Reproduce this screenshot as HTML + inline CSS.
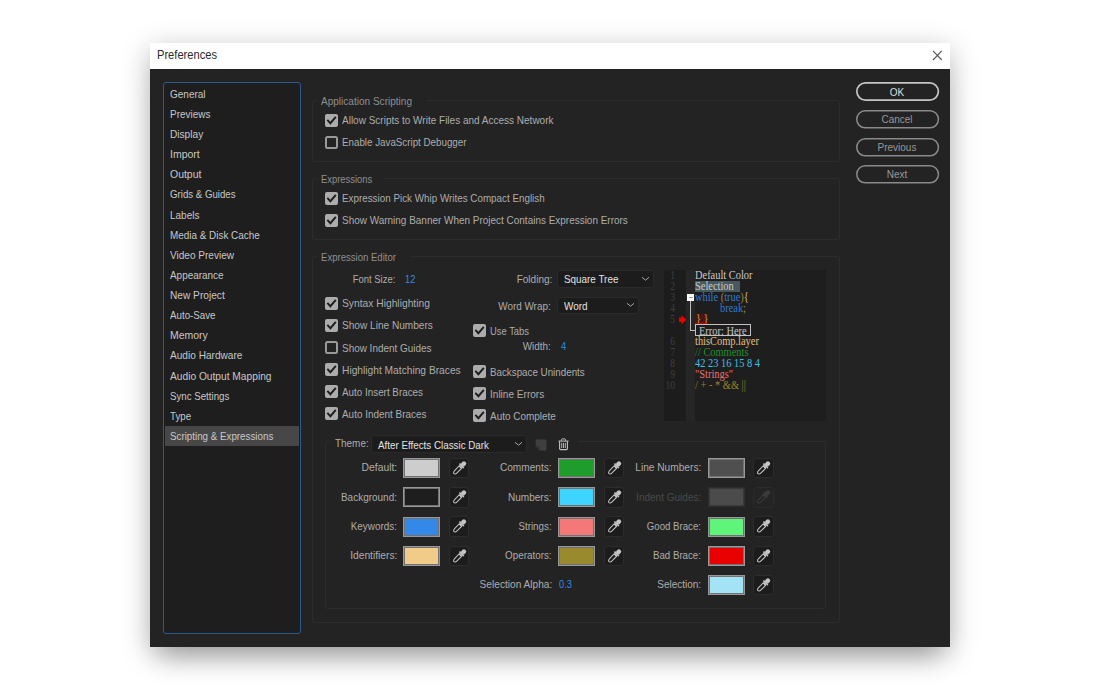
<!DOCTYPE html>
<html><head><meta charset="utf-8"><title>Preferences</title><style>
html,body{margin:0;padding:0;background:#fff;}
body{width:1100px;height:691px;position:relative;overflow:hidden;font-family:"Liberation Sans",sans-serif;}
.abs{position:absolute;display:block;}
.win{position:absolute;left:150px;top:43px;width:800px;height:604px;background:#232323;box-shadow:0 7px 27px rgba(0,0,0,.28),0 20px 26px -12px rgba(0,0,0,.22);}
.tb{position:absolute;left:150px;top:43px;width:800px;height:26px;background:#fff;}
.t{position:absolute;white-space:nowrap;line-height:14px;font-family:"Liberation Sans",sans-serif;color:#b0b0b0;}
.s{position:absolute;white-space:nowrap;line-height:12px;font-size:12px;font-family:"Liberation Serif",serif;}
.side{position:absolute;left:163px;top:82px;width:136px;height:550px;border:1px solid #2a5992;border-radius:3px;background:#1e1e1e;}
.sel{position:absolute;background:#474747;}
.si{color:#c8c8c8;}
.gt{color:#8f8f8f;}
.lb{color:#adadad;}
.dl{color:#4a4a4a;}
.num{color:#2d8ceb;}
.ddt{color:#e2e2e2;}
.bt{color:#989898;}
.bt.p{color:#dedede;}
.btn{position:absolute;width:80px;height:16px;border:1.7px solid #8a8a8a;border-radius:10px;}
.btn.prim{border:2px solid #c9c9c9;width:79px;height:15px;}
.gb{position:absolute;border:1px solid #2c2c2c;border-radius:2.5px;}
.gap{position:absolute;height:3px;background:#232323;}
.cb{position:absolute;width:13px;height:13px;box-sizing:border-box;border-radius:2px;}
.cb.on{background:#acacac;}
.cb.on svg{display:block;}
.cb.off{border:2px solid #999;background:#232323;border-radius:2.5px;}
.dd{position:absolute;border:1px solid #2a2a2a;border-radius:3px;background:#1c1c1c;}
.sw{position:absolute;width:33px;height:16px;border:1px solid #727272;box-shadow:0 0 0 1px #989898;margin:1px;}
.sw.dis{border-color:#383838;box-shadow:0 0 0 1px #2e2e2e;}
.eye{position:absolute;width:18.6px;height:18.6px;border:1px solid #2c2c2c;border-radius:3px;background:#1c1c1c;}
.eye svg{display:block;margin:-1px;}
.eye.dis{background:#242424;border-color:#2b2b2b;}
.pv{position:absolute;left:664.3px;top:269.7px;width:161.7px;height:151.3px;background:#1e1e1e;}
.pvg{position:absolute;left:664.3px;top:269.7px;width:21.5px;height:151.3px;background:#1c1c1c;}
.pvf{position:absolute;left:685.8px;top:269.7px;width:9.3px;height:151.3px;background:#262626;}
</style></head><body>
<div class="win"></div>
<div class="tb"></div>
<span class="t title" style="top:47.54px;font-size:12px;left:156.5px;transform:scaleX(0.927);transform-origin:0 0;color:#2a2a2a;">Preferences</span>
<svg class="abs" style="left:931px;top:48.5px" width="13" height="13" viewBox="0 0 13 13"><path d="M2 1.8 L10.8 11 M10.8 1.8 L2 11" stroke="#5a5a5a" stroke-width="1.2" fill="none"/></svg>
<div class="side"></div>
<div class="sel" style="left:165px;top:426px;width:134px;height:20px"></div>
<span class="t si" style="top:86.86px;font-size:10.5px;left:170px;transform:scaleX(0.9529);transform-origin:0 0;">General</span>
<span class="t si" style="top:106.98px;font-size:10.5px;left:170px;transform:scaleX(0.9481);transform-origin:0 0;">Previews</span>
<span class="t si" style="top:127.10px;font-size:10.5px;left:170px;transform:scaleX(0.9641);transform-origin:0 0;">Display</span>
<span class="t si" style="top:147.22px;font-size:10.5px;left:170px;transform:scaleX(1.0);transform-origin:0 0;">Import</span>
<span class="t si" style="top:167.34px;font-size:10.5px;left:170px;transform:scaleX(0.9958);transform-origin:0 0;">Output</span>
<span class="t si" style="top:187.46px;font-size:10.5px;left:170px;transform:scaleX(0.9199);transform-origin:0 0;">Grids &amp; Guides</span>
<span class="t si" style="top:207.58px;font-size:10.5px;left:170px;transform:scaleX(0.9498);transform-origin:0 0;">Labels</span>
<span class="t si" style="top:227.70px;font-size:10.5px;left:170px;transform:scaleX(0.943);transform-origin:0 0;">Media &amp; Disk Cache</span>
<span class="t si" style="top:247.82px;font-size:10.5px;left:170px;transform:scaleX(0.9561);transform-origin:0 0;">Video Preview</span>
<span class="t si" style="top:267.94px;font-size:10.5px;left:170px;transform:scaleX(0.9446);transform-origin:0 0;">Appearance</span>
<span class="t si" style="top:288.06px;font-size:10.5px;left:170px;transform:scaleX(0.9663);transform-origin:0 0;">New Project</span>
<span class="t si" style="top:308.18px;font-size:10.5px;left:170px;transform:scaleX(0.928);transform-origin:0 0;">Auto-Save</span>
<span class="t si" style="top:328.30px;font-size:10.5px;left:170px;transform:scaleX(0.9968);transform-origin:0 0;">Memory</span>
<span class="t si" style="top:348.42px;font-size:10.5px;left:170px;transform:scaleX(0.9615);transform-origin:0 0;">Audio Hardware</span>
<span class="t si" style="top:368.54px;font-size:10.5px;left:170px;transform:scaleX(0.9713);transform-origin:0 0;">Audio Output Mapping</span>
<span class="t si" style="top:388.66px;font-size:10.5px;left:170px;transform:scaleX(0.9236);transform-origin:0 0;">Sync Settings</span>
<span class="t si" style="top:408.78px;font-size:10.5px;left:170px;transform:scaleX(0.9268);transform-origin:0 0;">Type</span>
<span class="t si" style="top:428.90px;font-size:10.5px;left:170px;transform:scaleX(0.9315);transform-origin:0 0;">Scripting &amp; Expressions</span>
<svg class="abs" style="left:856px;top:82px" width="84" height="20" viewBox="0 0 84 20"><rect x="0.85" y="0.85" width="81.5" height="17.3" rx="8.65" fill="none" stroke="#c6c6c6" stroke-width="1.7"/></svg>
<span class="t bt p" style="top:84.86px;font-size:10.5px;left:796.9px;width:200px;text-align:center;transform:scaleX(0.95);transform-origin:50% 0;">OK</span>
<svg class="abs" style="left:856px;top:110px" width="84" height="20" viewBox="0 0 84 20"><rect x="0.75" y="0.75" width="81.7" height="17.1" rx="8.55" fill="none" stroke="#8a8a8a" stroke-width="1.5"/></svg>
<span class="t bt" style="top:112.16px;font-size:10.5px;left:796.9px;width:200px;text-align:center;transform:scaleX(0.95);transform-origin:50% 0;">Cancel</span>
<svg class="abs" style="left:856px;top:137.5px" width="84" height="20" viewBox="0 0 84 20"><rect x="0.75" y="0.75" width="81.7" height="17.1" rx="8.55" fill="none" stroke="#8a8a8a" stroke-width="1.5"/></svg>
<span class="t bt" style="top:139.66px;font-size:10.5px;left:796.9px;width:200px;text-align:center;transform:scaleX(0.95);transform-origin:50% 0;">Previous</span>
<svg class="abs" style="left:856px;top:165px" width="84" height="20" viewBox="0 0 84 20"><rect x="0.75" y="0.75" width="81.7" height="17.1" rx="8.55" fill="none" stroke="#8a8a8a" stroke-width="1.5"/></svg>
<span class="t bt" style="top:167.16px;font-size:10.5px;left:796.9px;width:200px;text-align:center;transform:scaleX(0.95);transform-origin:50% 0;">Next</span>
<div class="gb" style="left:312px;top:100px;width:526px;height:60px"></div>
<div class="gap" style="left:317px;top:99px;width:109px"></div>
<span class="t gt" style="top:93.96px;font-size:10.5px;left:321px;transform:scaleX(0.9565);transform-origin:0 0;">Application Scripting</span>
<div class="cb on" style="left:325px;top:114px"><svg viewBox="0 0 13 13" width="13" height="13"><path d="M3 6.6 L5.4 9.2 L10.2 3.6" fill="none" stroke="#1c1c1c" stroke-width="1.9" stroke-linecap="square" stroke-linejoin="miter"/></svg></div>
<span class="t lb" style="top:113.26px;font-size:10.5px;left:342px;transform:scaleX(0.9521);transform-origin:0 0;">Allow Scripts to Write Files and Access Network</span>
<div class="cb off" style="left:325px;top:135.5px"></div>
<span class="t lb" style="top:134.76px;font-size:10.5px;left:342px;transform:scaleX(0.9314);transform-origin:0 0;">Enable JavaScript Debugger</span>
<div class="gb" style="left:312px;top:178px;width:526px;height:60px"></div>
<div class="gap" style="left:317px;top:177px;width:65.5px"></div>
<span class="t gt" style="top:172.06px;font-size:10.5px;left:321px;transform:scaleX(0.8951);transform-origin:0 0;">Expressions</span>
<div class="cb on" style="left:325px;top:191.5px"><svg viewBox="0 0 13 13" width="13" height="13"><path d="M3 6.6 L5.4 9.2 L10.2 3.6" fill="none" stroke="#1c1c1c" stroke-width="1.9" stroke-linecap="square" stroke-linejoin="miter"/></svg></div>
<span class="t lb" style="top:190.76px;font-size:10.5px;left:342px;transform:scaleX(0.9371);transform-origin:0 0;">Expression Pick Whip Writes Compact English</span>
<div class="cb on" style="left:325px;top:213.5px"><svg viewBox="0 0 13 13" width="13" height="13"><path d="M3 6.6 L5.4 9.2 L10.2 3.6" fill="none" stroke="#1c1c1c" stroke-width="1.9" stroke-linecap="square" stroke-linejoin="miter"/></svg></div>
<span class="t lb" style="top:212.76px;font-size:10.5px;left:342px;transform:scaleX(0.9485);transform-origin:0 0;">Show Warning Banner When Project Contains Expression Errors</span>
<div class="gb" style="left:312px;top:256px;width:526px;height:365px"></div>
<div class="gap" style="left:317px;top:255px;width:92.5px"></div>
<span class="t gt" style="top:250.36px;font-size:10.5px;left:321px;transform:scaleX(0.9113);transform-origin:0 0;">Expression Editor</span>
<span class="t lb" style="top:271.76px;font-size:10.5px;right:704.5px;transform:scaleX(0.901);transform-origin:100% 0;">Font Size:</span>
<span class="t num" style="top:271.76px;font-size:10.5px;left:404.8px;transform:scaleX(0.88);transform-origin:0 0;">12</span>
<div class="cb on" style="left:325px;top:297px"><svg viewBox="0 0 13 13" width="13" height="13"><path d="M3 6.6 L5.4 9.2 L10.2 3.6" fill="none" stroke="#1c1c1c" stroke-width="1.9" stroke-linecap="square" stroke-linejoin="miter"/></svg></div>
<span class="t lb" style="top:296.26px;font-size:10.5px;left:342px;transform:scaleX(0.9779);transform-origin:0 0;">Syntax Highlighting</span>
<div class="cb on" style="left:325px;top:319px"><svg viewBox="0 0 13 13" width="13" height="13"><path d="M3 6.6 L5.4 9.2 L10.2 3.6" fill="none" stroke="#1c1c1c" stroke-width="1.9" stroke-linecap="square" stroke-linejoin="miter"/></svg></div>
<span class="t lb" style="top:318.26px;font-size:10.5px;left:342px;transform:scaleX(0.9614);transform-origin:0 0;">Show Line Numbers</span>
<div class="cb off" style="left:325px;top:341.3px"></div>
<span class="t lb" style="top:340.56px;font-size:10.5px;left:342px;transform:scaleX(0.9465);transform-origin:0 0;">Show Indent Guides</span>
<div class="cb on" style="left:325px;top:363.3px"><svg viewBox="0 0 13 13" width="13" height="13"><path d="M3 6.6 L5.4 9.2 L10.2 3.6" fill="none" stroke="#1c1c1c" stroke-width="1.9" stroke-linecap="square" stroke-linejoin="miter"/></svg></div>
<span class="t lb" style="top:362.56px;font-size:10.5px;left:342px;transform:scaleX(0.9731);transform-origin:0 0;">Highlight Matching Braces</span>
<div class="cb on" style="left:325px;top:385.3px"><svg viewBox="0 0 13 13" width="13" height="13"><path d="M3 6.6 L5.4 9.2 L10.2 3.6" fill="none" stroke="#1c1c1c" stroke-width="1.9" stroke-linecap="square" stroke-linejoin="miter"/></svg></div>
<span class="t lb" style="top:384.56px;font-size:10.5px;left:342px;transform:scaleX(0.9378);transform-origin:0 0;">Auto Insert Braces</span>
<div class="cb on" style="left:325px;top:407.3px"><svg viewBox="0 0 13 13" width="13" height="13"><path d="M3 6.6 L5.4 9.2 L10.2 3.6" fill="none" stroke="#1c1c1c" stroke-width="1.9" stroke-linecap="square" stroke-linejoin="miter"/></svg></div>
<span class="t lb" style="top:406.56px;font-size:10.5px;left:342px;transform:scaleX(0.945);transform-origin:0 0;">Auto Indent Braces</span>
<span class="t lb" style="top:271.76px;font-size:10.5px;right:548px;transform:scaleX(0.9556);transform-origin:100% 0;">Folding:</span>
<div class="dd" style="left:557px;top:270px;width:95px;height:16px"></div>
<span class="t ddt" style="top:271.76px;font-size:10.5px;left:564.3px;transform:scaleX(0.9412);transform-origin:0 0;">Square Tree</span>
<svg class="abs" style="left:641.0px;top:275.7px" width="9" height="6" viewBox="0 0 9 6"><path d="M1 1.3 L4.5 4.2 L8 1.3" fill="none" stroke="#a6a6a6" stroke-width="1"/></svg>
<span class="t lb" style="top:299.36px;font-size:10.5px;right:549.4px;transform:scaleX(0.9418);transform-origin:100% 0;">Word Wrap:</span>
<div class="dd" style="left:557px;top:297px;width:80px;height:15px"></div>
<span class="t ddt" style="top:299.16px;font-size:10.5px;left:564.3px;transform:scaleX(0.95);transform-origin:0 0;">Word</span>
<svg class="abs" style="left:626.0px;top:302.2px" width="9" height="6" viewBox="0 0 9 6"><path d="M1 1.3 L4.5 4.2 L8 1.3" fill="none" stroke="#a6a6a6" stroke-width="1"/></svg>
<div class="cb on" style="left:473px;top:324px"><svg viewBox="0 0 13 13" width="13" height="13"><path d="M3 6.6 L5.4 9.2 L10.2 3.6" fill="none" stroke="#1c1c1c" stroke-width="1.9" stroke-linecap="square" stroke-linejoin="miter"/></svg></div>
<span class="t lb" style="top:324.26px;font-size:10.5px;left:489.6px;transform:scaleX(0.8946);transform-origin:0 0;">Use Tabs</span>
<span class="t lb" style="top:338.76px;font-size:10.5px;right:549.2px;transform:scaleX(0.944);transform-origin:100% 0;">Width:</span>
<span class="t num" style="top:338.76px;font-size:10.5px;left:560.5px;transform:scaleX(0.88);transform-origin:0 0;">4</span>
<div class="cb on" style="left:473px;top:364.9px"><svg viewBox="0 0 13 13" width="13" height="13"><path d="M3 6.6 L5.4 9.2 L10.2 3.6" fill="none" stroke="#1c1c1c" stroke-width="1.9" stroke-linecap="square" stroke-linejoin="miter"/></svg></div>
<span class="t lb" style="top:364.56px;font-size:10.5px;left:489.6px;transform:scaleX(0.9324);transform-origin:0 0;">Backspace Unindents</span>
<div class="cb on" style="left:473px;top:386.9px"><svg viewBox="0 0 13 13" width="13" height="13"><path d="M3 6.6 L5.4 9.2 L10.2 3.6" fill="none" stroke="#1c1c1c" stroke-width="1.9" stroke-linecap="square" stroke-linejoin="miter"/></svg></div>
<span class="t lb" style="top:386.56px;font-size:10.5px;left:489.6px;transform:scaleX(0.9574);transform-origin:0 0;">Inline Errors</span>
<div class="cb on" style="left:473px;top:408.9px"><svg viewBox="0 0 13 13" width="13" height="13"><path d="M3 6.6 L5.4 9.2 L10.2 3.6" fill="none" stroke="#1c1c1c" stroke-width="1.9" stroke-linecap="square" stroke-linejoin="miter"/></svg></div>
<span class="t lb" style="top:408.56px;font-size:10.5px;left:489.6px;transform:scaleX(0.9472);transform-origin:0 0;">Auto Complete</span>
<div class="pv"></div><div class="pvg"></div><div class="pvf"></div>
<span class="s" style="right:425px;top:269.15px;color:#3f3f3f;transform:scaleX(0.8);transform-origin:100% 0;">1</span>
<span class="s" style="right:425px;top:280.15px;color:#3f3f3f;transform:scaleX(0.8);transform-origin:100% 0;">2</span>
<span class="s" style="right:425px;top:291.25px;color:#3f3f3f;transform:scaleX(0.8);transform-origin:100% 0;">3</span>
<span class="s" style="right:425px;top:302.25px;color:#3f3f3f;transform:scaleX(0.8);transform-origin:100% 0;">4</span>
<span class="s" style="right:425px;top:313.25px;color:#3f3f3f;transform:scaleX(0.8);transform-origin:100% 0;">5</span>
<span class="s" style="right:425px;top:335.15px;color:#3f3f3f;transform:scaleX(0.8);transform-origin:100% 0;">6</span>
<span class="s" style="right:425px;top:346.25px;color:#3f3f3f;transform:scaleX(0.8);transform-origin:100% 0;">7</span>
<span class="s" style="right:425px;top:357.05px;color:#3f3f3f;transform:scaleX(0.8);transform-origin:100% 0;">8</span>
<span class="s" style="right:425px;top:368.25px;color:#3f3f3f;transform:scaleX(0.8);transform-origin:100% 0;">9</span>
<span class="s" style="right:425px;top:379.15px;color:#3f3f3f;transform:scaleX(0.8);transform-origin:100% 0;">10</span>
<div class="abs" style="left:695.3px;top:281px;width:45px;height:11px;background:#47595e"></div>
<span class="s" style="left:695.3px;top:269.15px;color:#c9c9c9;transform:scaleX(0.867);transform-origin:0 0;">Default Color</span>
<span class="s" style="left:695.3px;top:280.15px;color:#c9c9c9;transform:scaleX(0.867);transform-origin:0 0;">Selection</span>
<span class="s" style="left:695.3px;top:291.25px;color:#c9c9c9;transform:scaleX(0.867);transform-origin:0 0;"><span style="color:#3179d0">while</span> <span style="color:#9a8b2e">(</span><span style="color:#3179d0">true</span><span style="color:#9a8b2e">)</span><span style="color:#d9b878">{</span></span>
<span class="s" style="left:719.5px;top:302.25px;color:#c9c9c9;transform:scaleX(0.867);transform-origin:0 0;"><span style="color:#3179d0">break</span><span style="color:#9a8b2e">;</span></span>
<div class="abs" style="left:695.3px;top:314px;width:12.5px;height:10px;background:#4a1414"></div>
<span class="s" style="left:695.5999999999999px;top:313.25px;color:#c9a43c;transform:scaleX(0.867);transform-origin:0 0;">}&nbsp;}</span>
<svg class="abs" style="left:695px;top:321.5px" width="13" height="3" viewBox="0 0 13 3"><path d="M0 2 L1.5 0.6 L3 2 L4.5 0.6 L6 2 L7.5 0.6 L9 2 L10.5 0.6 L12 2" stroke="#e00000" stroke-width="0.9" fill="none"/></svg>
<div class="abs" style="left:695.3px;top:324.3px;width:53.7px;height:10.2px;border:1px solid #c2c2c2;background:#1e1e1e"></div>
<span class="s" style="left:698.8px;top:324.75px;color:#c4c4c4;transform:scaleX(0.867);transform-origin:0 0;">Error: Here</span>
<span class="s" style="left:695.3px;top:335.15px;color:#e0c084;transform:scaleX(0.867);transform-origin:0 0;">thisComp.layer</span>
<span class="s" style="left:695.3px;top:346.25px;color:#1f8f2a;transform:scaleX(0.867);transform-origin:0 0;">// Comments</span>
<span class="s" style="left:695.3px;top:357.05px;color:#3cc0e8;transform:scaleX(0.867);transform-origin:0 0;">42 23 16 15 8 4</span>
<span class="s" style="left:695.3px;top:368.25px;color:#e87070;transform:scaleX(0.867);transform-origin:0 0;">"Strings"</span>
<span class="s" style="left:695.3px;top:379.15px;color:#94842c;transform:scaleX(0.867);transform-origin:0 0;">/ + - * &amp;&amp; ||</span>
<div class="abs" style="left:687px;top:294px;width:7px;height:7px;background:#fcfcfc"></div>
<div class="abs" style="left:688.8px;top:297px;width:4px;height:1px;background:#9a9a9a"></div>
<div class="abs" style="left:690px;top:301px;width:1px;height:29px;background:#bcbcbc"></div>
<div class="abs" style="left:690px;top:330px;width:5.3px;height:1px;background:#bcbcbc"></div>
<svg class="abs" style="left:678.8px;top:314.5px" width="8" height="10" viewBox="0 0 8 10"><path d="M0 2.5 H2.5 V0.1 L7.3 4.8 L2.5 9.5 V7.1 H0 Z" fill="#e60000"/></svg>
<div class="gb" style="left:325px;top:441px;width:499px;height:166px"></div>
<div class="gap" style="left:331px;top:440px;width:246.5px"></div>
<span class="t lb" style="top:435.86px;font-size:10.5px;left:335.4px;transform:scaleX(0.9464);transform-origin:0 0;">Theme:</span>
<div class="dd" style="left:371px;top:435px;width:154px;height:16px"></div>
<span class="t ddt" style="top:437.56px;font-size:10.5px;left:377.8px;transform:scaleX(0.934);transform-origin:0 0;">After Effects Classic Dark</span>
<svg class="abs" style="left:514.0px;top:440.7px" width="9" height="6" viewBox="0 0 9 6"><path d="M1 1.3 L4.5 4.2 L8 1.3" fill="none" stroke="#a6a6a6" stroke-width="1"/></svg>
<svg class="abs" style="left:535px;top:438.6px" width="12" height="12" viewBox="0 0 12 12"><path d="M0.6 0.6 H11.4 V11.4 H4.4 L0.6 7.6 Z" fill="#3f3f3f"/><path d="M0.6 7.6 H4.4 V11.4 Z" fill="#2d2d2d"/></svg>
<svg class="abs" style="left:558px;top:438.2px" width="11" height="13" viewBox="0 0 11 13"><g fill="none" stroke="#c2c2c2" stroke-width="1"><path d="M0.4 3.1 H10.6"/><path d="M3.6 2.9 V1.5 Q3.6 0.9 4.2 0.9 H6.8 Q7.4 0.9 7.4 1.5 V2.9"/><path d="M1.6 3.3 V10.6 Q1.6 11.6 2.6 11.6 H8.4 Q9.4 11.6 9.4 10.6 V3.3" stroke-width="1.1"/><path d="M3.7 4.9 V10 M5.5 4.9 V10 M7.3 4.9 V10" stroke-width="0.9"/></g></svg>
<span class="t lb" style="top:460.46px;font-size:10.5px;right:702.7px;transform:scaleX(0.9838);transform-origin:100% 0;">Default:</span>
<div class="sw" style="left:403px;top:458px;background:#cdcdcd"></div>
<div class="eye" style="left:448.6px;top:457.8px"><svg viewBox="0 0 19 19" width="19" height="19"><g transform="translate(10.6 9.9) rotate(45)" fill="#c4c4c4" stroke="none">
<rect x="-2.2" y="-8.3" width="4.4" height="5.2" rx="1.9"/>
<rect x="-3.2" y="-3.7" width="6.4" height="1.6" rx="0.5"/>
<rect x="-1.9" y="-2.3" width="3.8" height="1.5"/>
<path d="M-1.7 -1 L1.7 -1 L1.7 5.4 Q1.7 7.7 0 8.1 Q-1.7 7.7 -1.7 5.4 Z" fill="none" stroke="#c4c4c4" stroke-width="1.05"/>
</g></svg></div>
<span class="t lb" style="top:489.71px;font-size:10.5px;right:702.7px;transform:scaleX(0.9497);transform-origin:100% 0;">Background:</span>
<div class="sw" style="left:403px;top:487.25px;background:#1e1e1e"></div>
<div class="eye" style="left:448.6px;top:487.05px"><svg viewBox="0 0 19 19" width="19" height="19"><g transform="translate(10.6 9.9) rotate(45)" fill="#c4c4c4" stroke="none">
<rect x="-2.2" y="-8.3" width="4.4" height="5.2" rx="1.9"/>
<rect x="-3.2" y="-3.7" width="6.4" height="1.6" rx="0.5"/>
<rect x="-1.9" y="-2.3" width="3.8" height="1.5"/>
<path d="M-1.7 -1 L1.7 -1 L1.7 5.4 Q1.7 7.7 0 8.1 Q-1.7 7.7 -1.7 5.4 Z" fill="none" stroke="#c4c4c4" stroke-width="1.05"/>
</g></svg></div>
<span class="t lb" style="top:518.96px;font-size:10.5px;right:702.7px;transform:scaleX(0.9443);transform-origin:100% 0;">Keywords:</span>
<div class="sw" style="left:403px;top:516.5px;background:#3388e8"></div>
<div class="eye" style="left:448.6px;top:516.3px"><svg viewBox="0 0 19 19" width="19" height="19"><g transform="translate(10.6 9.9) rotate(45)" fill="#c4c4c4" stroke="none">
<rect x="-2.2" y="-8.3" width="4.4" height="5.2" rx="1.9"/>
<rect x="-3.2" y="-3.7" width="6.4" height="1.6" rx="0.5"/>
<rect x="-1.9" y="-2.3" width="3.8" height="1.5"/>
<path d="M-1.7 -1 L1.7 -1 L1.7 5.4 Q1.7 7.7 0 8.1 Q-1.7 7.7 -1.7 5.4 Z" fill="none" stroke="#c4c4c4" stroke-width="1.05"/>
</g></svg></div>
<span class="t lb" style="top:548.21px;font-size:10.5px;right:702.7px;transform:scaleX(0.9762);transform-origin:100% 0;">Identifiers:</span>
<div class="sw" style="left:403px;top:545.75px;background:#f0cc88"></div>
<div class="eye" style="left:448.6px;top:545.55px"><svg viewBox="0 0 19 19" width="19" height="19"><g transform="translate(10.6 9.9) rotate(45)" fill="#c4c4c4" stroke="none">
<rect x="-2.2" y="-8.3" width="4.4" height="5.2" rx="1.9"/>
<rect x="-3.2" y="-3.7" width="6.4" height="1.6" rx="0.5"/>
<rect x="-1.9" y="-2.3" width="3.8" height="1.5"/>
<path d="M-1.7 -1 L1.7 -1 L1.7 5.4 Q1.7 7.7 0 8.1 Q-1.7 7.7 -1.7 5.4 Z" fill="none" stroke="#c4c4c4" stroke-width="1.05"/>
</g></svg></div>
<span class="t lb" style="top:460.46px;font-size:10.5px;right:548px;transform:scaleX(0.9648);transform-origin:100% 0;">Comments:</span>
<div class="sw" style="left:558px;top:458px;background:#1f9d2c"></div>
<div class="eye" style="left:603.7px;top:457.8px"><svg viewBox="0 0 19 19" width="19" height="19"><g transform="translate(10.6 9.9) rotate(45)" fill="#c4c4c4" stroke="none">
<rect x="-2.2" y="-8.3" width="4.4" height="5.2" rx="1.9"/>
<rect x="-3.2" y="-3.7" width="6.4" height="1.6" rx="0.5"/>
<rect x="-1.9" y="-2.3" width="3.8" height="1.5"/>
<path d="M-1.7 -1 L1.7 -1 L1.7 5.4 Q1.7 7.7 0 8.1 Q-1.7 7.7 -1.7 5.4 Z" fill="none" stroke="#c4c4c4" stroke-width="1.05"/>
</g></svg></div>
<span class="t lb" style="top:489.71px;font-size:10.5px;right:548px;transform:scaleX(0.9579);transform-origin:100% 0;">Numbers:</span>
<div class="sw" style="left:558px;top:487.25px;background:#3dd5ff"></div>
<div class="eye" style="left:603.7px;top:487.05px"><svg viewBox="0 0 19 19" width="19" height="19"><g transform="translate(10.6 9.9) rotate(45)" fill="#c4c4c4" stroke="none">
<rect x="-2.2" y="-8.3" width="4.4" height="5.2" rx="1.9"/>
<rect x="-3.2" y="-3.7" width="6.4" height="1.6" rx="0.5"/>
<rect x="-1.9" y="-2.3" width="3.8" height="1.5"/>
<path d="M-1.7 -1 L1.7 -1 L1.7 5.4 Q1.7 7.7 0 8.1 Q-1.7 7.7 -1.7 5.4 Z" fill="none" stroke="#c4c4c4" stroke-width="1.05"/>
</g></svg></div>
<span class="t lb" style="top:518.96px;font-size:10.5px;right:548px;transform:scaleX(0.9323);transform-origin:100% 0;">Strings:</span>
<div class="sw" style="left:558px;top:516.5px;background:#f57878"></div>
<div class="eye" style="left:603.7px;top:516.3px"><svg viewBox="0 0 19 19" width="19" height="19"><g transform="translate(10.6 9.9) rotate(45)" fill="#c4c4c4" stroke="none">
<rect x="-2.2" y="-8.3" width="4.4" height="5.2" rx="1.9"/>
<rect x="-3.2" y="-3.7" width="6.4" height="1.6" rx="0.5"/>
<rect x="-1.9" y="-2.3" width="3.8" height="1.5"/>
<path d="M-1.7 -1 L1.7 -1 L1.7 5.4 Q1.7 7.7 0 8.1 Q-1.7 7.7 -1.7 5.4 Z" fill="none" stroke="#c4c4c4" stroke-width="1.05"/>
</g></svg></div>
<span class="t lb" style="top:548.21px;font-size:10.5px;right:548px;transform:scaleX(0.9373);transform-origin:100% 0;">Operators:</span>
<div class="sw" style="left:558px;top:545.75px;background:#998a2e"></div>
<div class="eye" style="left:603.7px;top:545.55px"><svg viewBox="0 0 19 19" width="19" height="19"><g transform="translate(10.6 9.9) rotate(45)" fill="#c4c4c4" stroke="none">
<rect x="-2.2" y="-8.3" width="4.4" height="5.2" rx="1.9"/>
<rect x="-3.2" y="-3.7" width="6.4" height="1.6" rx="0.5"/>
<rect x="-1.9" y="-2.3" width="3.8" height="1.5"/>
<path d="M-1.7 -1 L1.7 -1 L1.7 5.4 Q1.7 7.7 0 8.1 Q-1.7 7.7 -1.7 5.4 Z" fill="none" stroke="#c4c4c4" stroke-width="1.05"/>
</g></svg></div>
<span class="t lb" style="top:460.46px;font-size:10.5px;right:398.79999999999995px;transform:scaleX(0.9666);transform-origin:100% 0;">Line Numbers:</span>
<div class="sw" style="left:708px;top:458px;background:#4f4f4f"></div>
<div class="eye" style="left:753.4px;top:457.8px"><svg viewBox="0 0 19 19" width="19" height="19"><g transform="translate(10.6 9.9) rotate(45)" fill="#c4c4c4" stroke="none">
<rect x="-2.2" y="-8.3" width="4.4" height="5.2" rx="1.9"/>
<rect x="-3.2" y="-3.7" width="6.4" height="1.6" rx="0.5"/>
<rect x="-1.9" y="-2.3" width="3.8" height="1.5"/>
<path d="M-1.7 -1 L1.7 -1 L1.7 5.4 Q1.7 7.7 0 8.1 Q-1.7 7.7 -1.7 5.4 Z" fill="none" stroke="#c4c4c4" stroke-width="1.05"/>
</g></svg></div>
<span class="t lb dl" style="top:489.71px;font-size:10.5px;right:398.79999999999995px;transform:scaleX(0.9547);transform-origin:100% 0;">Indent Guides:</span>
<div class="sw dis" style="left:708px;top:487.25px;background:#4b4b4b"></div>
<div class="eye dis" style="left:753.4px;top:487.05px"><svg viewBox="0 0 19 19" width="19" height="19"><g transform="translate(10.6 9.9) rotate(45)" fill="#3c3c3c" stroke="none">
<rect x="-2.2" y="-8.3" width="4.4" height="5.2" rx="1.9"/>
<rect x="-3.2" y="-3.7" width="6.4" height="1.6" rx="0.5"/>
<rect x="-1.9" y="-2.3" width="3.8" height="1.5"/>
<path d="M-1.7 -1 L1.7 -1 L1.7 5.4 Q1.7 7.7 0 8.1 Q-1.7 7.7 -1.7 5.4 Z" fill="none" stroke="#3c3c3c" stroke-width="1.05"/>
</g></svg></div>
<span class="t lb" style="top:518.96px;font-size:10.5px;right:398.79999999999995px;transform:scaleX(0.9177);transform-origin:100% 0;">Good Brace:</span>
<div class="sw" style="left:708px;top:516.5px;background:#5ef57a"></div>
<div class="eye" style="left:753.4px;top:516.3px"><svg viewBox="0 0 19 19" width="19" height="19"><g transform="translate(10.6 9.9) rotate(45)" fill="#c4c4c4" stroke="none">
<rect x="-2.2" y="-8.3" width="4.4" height="5.2" rx="1.9"/>
<rect x="-3.2" y="-3.7" width="6.4" height="1.6" rx="0.5"/>
<rect x="-1.9" y="-2.3" width="3.8" height="1.5"/>
<path d="M-1.7 -1 L1.7 -1 L1.7 5.4 Q1.7 7.7 0 8.1 Q-1.7 7.7 -1.7 5.4 Z" fill="none" stroke="#c4c4c4" stroke-width="1.05"/>
</g></svg></div>
<span class="t lb" style="top:548.21px;font-size:10.5px;right:398.79999999999995px;transform:scaleX(0.9239);transform-origin:100% 0;">Bad Brace:</span>
<div class="sw" style="left:708px;top:545.75px;background:#e80000"></div>
<div class="eye" style="left:753.4px;top:545.55px"><svg viewBox="0 0 19 19" width="19" height="19"><g transform="translate(10.6 9.9) rotate(45)" fill="#c4c4c4" stroke="none">
<rect x="-2.2" y="-8.3" width="4.4" height="5.2" rx="1.9"/>
<rect x="-3.2" y="-3.7" width="6.4" height="1.6" rx="0.5"/>
<rect x="-1.9" y="-2.3" width="3.8" height="1.5"/>
<path d="M-1.7 -1 L1.7 -1 L1.7 5.4 Q1.7 7.7 0 8.1 Q-1.7 7.7 -1.7 5.4 Z" fill="none" stroke="#c4c4c4" stroke-width="1.05"/>
</g></svg></div>
<span class="t lb" style="top:577.46px;font-size:10.5px;right:398.79999999999995px;transform:scaleX(0.9518);transform-origin:100% 0;">Selection:</span>
<div class="sw" style="left:708px;top:575px;background:#a3e3f5"></div>
<div class="eye" style="left:753.4px;top:574.8px"><svg viewBox="0 0 19 19" width="19" height="19"><g transform="translate(10.6 9.9) rotate(45)" fill="#c4c4c4" stroke="none">
<rect x="-2.2" y="-8.3" width="4.4" height="5.2" rx="1.9"/>
<rect x="-3.2" y="-3.7" width="6.4" height="1.6" rx="0.5"/>
<rect x="-1.9" y="-2.3" width="3.8" height="1.5"/>
<path d="M-1.7 -1 L1.7 -1 L1.7 5.4 Q1.7 7.7 0 8.1 Q-1.7 7.7 -1.7 5.4 Z" fill="none" stroke="#c4c4c4" stroke-width="1.05"/>
</g></svg></div>
<span class="t lb" style="top:577.46px;font-size:10.5px;right:547.9px;transform:scaleX(0.9653);transform-origin:100% 0;">Selection Alpha:</span>
<span class="t num" style="top:577.46px;font-size:10.5px;left:558.8px;transform:scaleX(0.88);transform-origin:0 0;">0.3</span>
</body></html>
